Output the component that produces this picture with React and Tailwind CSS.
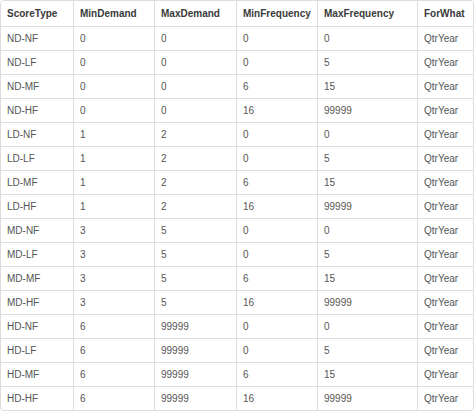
const headers = ["ScoreType", "MinDemand", "MaxDemand", "MinFrequency", "MaxFrequency", "ForWhat"];

const demand = { ND: [0, 0], LD: [1, 2], MD: [3, 5], HD: [6, 99999] };
const freq = { NF: [0, 0], LF: [0, 5], MF: [6, 15], HF: [16, 99999] };

const rows = [];
Object.keys(demand).forEach((d) => {
  Object.keys(freq).forEach((f) => {
    rows.push([`${d}-${f}`, demand[d][0], demand[d][1], freq[f][0], freq[f][1], "QtrYear"]);
  });
});

const widths = ["w-[72px]", "w-[81px]", "w-[82px]", "w-[81px]", "w-[100px]", "w-auto"];

const App = () => {
  return (
    <div className="w-[474px] h-[420px] bg-white font-['Liberation_Sans',Arial,sans-serif] text-[10px]">
      <table className="w-[474px] table-fixed border-separate border-spacing-0 border border-[#dddddd] rounded-[4px]">
        <colgroup>
          {widths.map((w, i) => (
            <col key={i} className={w} />
          ))}
        </colgroup>
        <thead>
          <tr className="h-[25px]">
            {headers.map((h, i) => (
              <th
                key={h}
                className={`text-left font-bold text-[#3a3a3a] px-[6px] align-middle ${i > 0 ? "border-l border-[#dddddd]" : ""}`}
              >
                {h}
              </th>
            ))}
          </tr>
        </thead>
        <tbody>
          {rows.map((r, ri) => (
            <tr key={ri} className="h-[24px]">
              {r.map((c, i) => (
                <td
                  key={i}
                  className={`px-[6px] align-middle text-[#555555] border-t border-[#dddddd] ${i > 0 ? "border-l" : ""}`}
                >
                  {c}
                </td>
              ))}
            </tr>
          ))}
        </tbody>
      </table>
    </div>
  );
};

export default App;
